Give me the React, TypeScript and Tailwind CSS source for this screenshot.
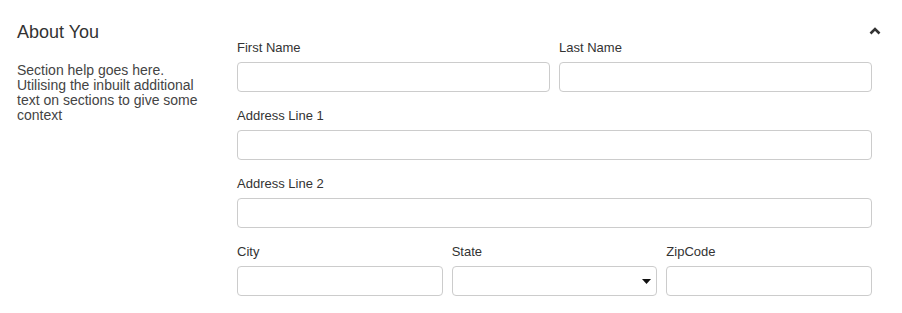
import React from 'react';

// Single form section: "About You"
const font = { fontFamily: '"Liberation Sans", Arial, sans-serif' };

function Field({ label, select = false }: { label: string; select?: boolean }) {
  return (
    <div className="flex flex-col min-w-0">
      <label className="text-[13px] leading-[15px] text-[#333] mb-[7px]">{label}</label>
      {select ? (
        <div className="relative h-[30px] rounded-[4px] border border-[#ccc] bg-white flex items-center justify-end pr-[5px]">
          <svg width="9" height="5" viewBox="0 0 9 5">
            <path d="M0 0 H9 L4.5 5 Z" fill="#111" />
          </svg>
        </div>
      ) : (
        <input className="h-[30px] w-full rounded-[4px] border border-[#ccc] bg-white px-2 outline-none" />
      )}
    </div>
  );
}

export default function App() {
  return (
    <div className="w-[902px] h-[313px] bg-white text-[#333]" style={font}>
      <div className="flex pl-[17px] pt-[21px]">
        {/* --- Left: title + help --- */}
        <div className="w-[220px] shrink-0">
          <h2 className="text-[18px] leading-[22px] text-[#333]">About You</h2>
          <p className="mt-[20px] w-[190px] text-[14px] leading-[15px] text-[#444]">
            Section help goes here. Utilising the inbuilt additional text on sections to give some context
          </p>
        </div>

        {/* --- Right: fields --- */}
        <div className="w-[635px] flex flex-col">
          <div className="h-[19px] flex items-center justify-end -mr-[9px]">
            <svg width="12" height="8" viewBox="0 0 12 8">
              <path d="M1.5 6.5 L6 2 L10.5 6.5" fill="none" stroke="#333" strokeWidth="2.6" />
            </svg>
          </div>
          <div className="flex flex-col gap-[16px]">
            <div className="grid grid-cols-2 gap-[9px]">
              <Field label="First Name" />
              <Field label="Last Name" />
            </div>
            <Field label="Address Line 1" />
            <Field label="Address Line 2" />
            <div className="grid grid-cols-3 gap-[9px]">
              <Field label="City" />
              <Field label="State" select />
              <Field label="ZipCode" />
            </div>
          </div>
        </div>
      </div>
    </div>
  );
}
